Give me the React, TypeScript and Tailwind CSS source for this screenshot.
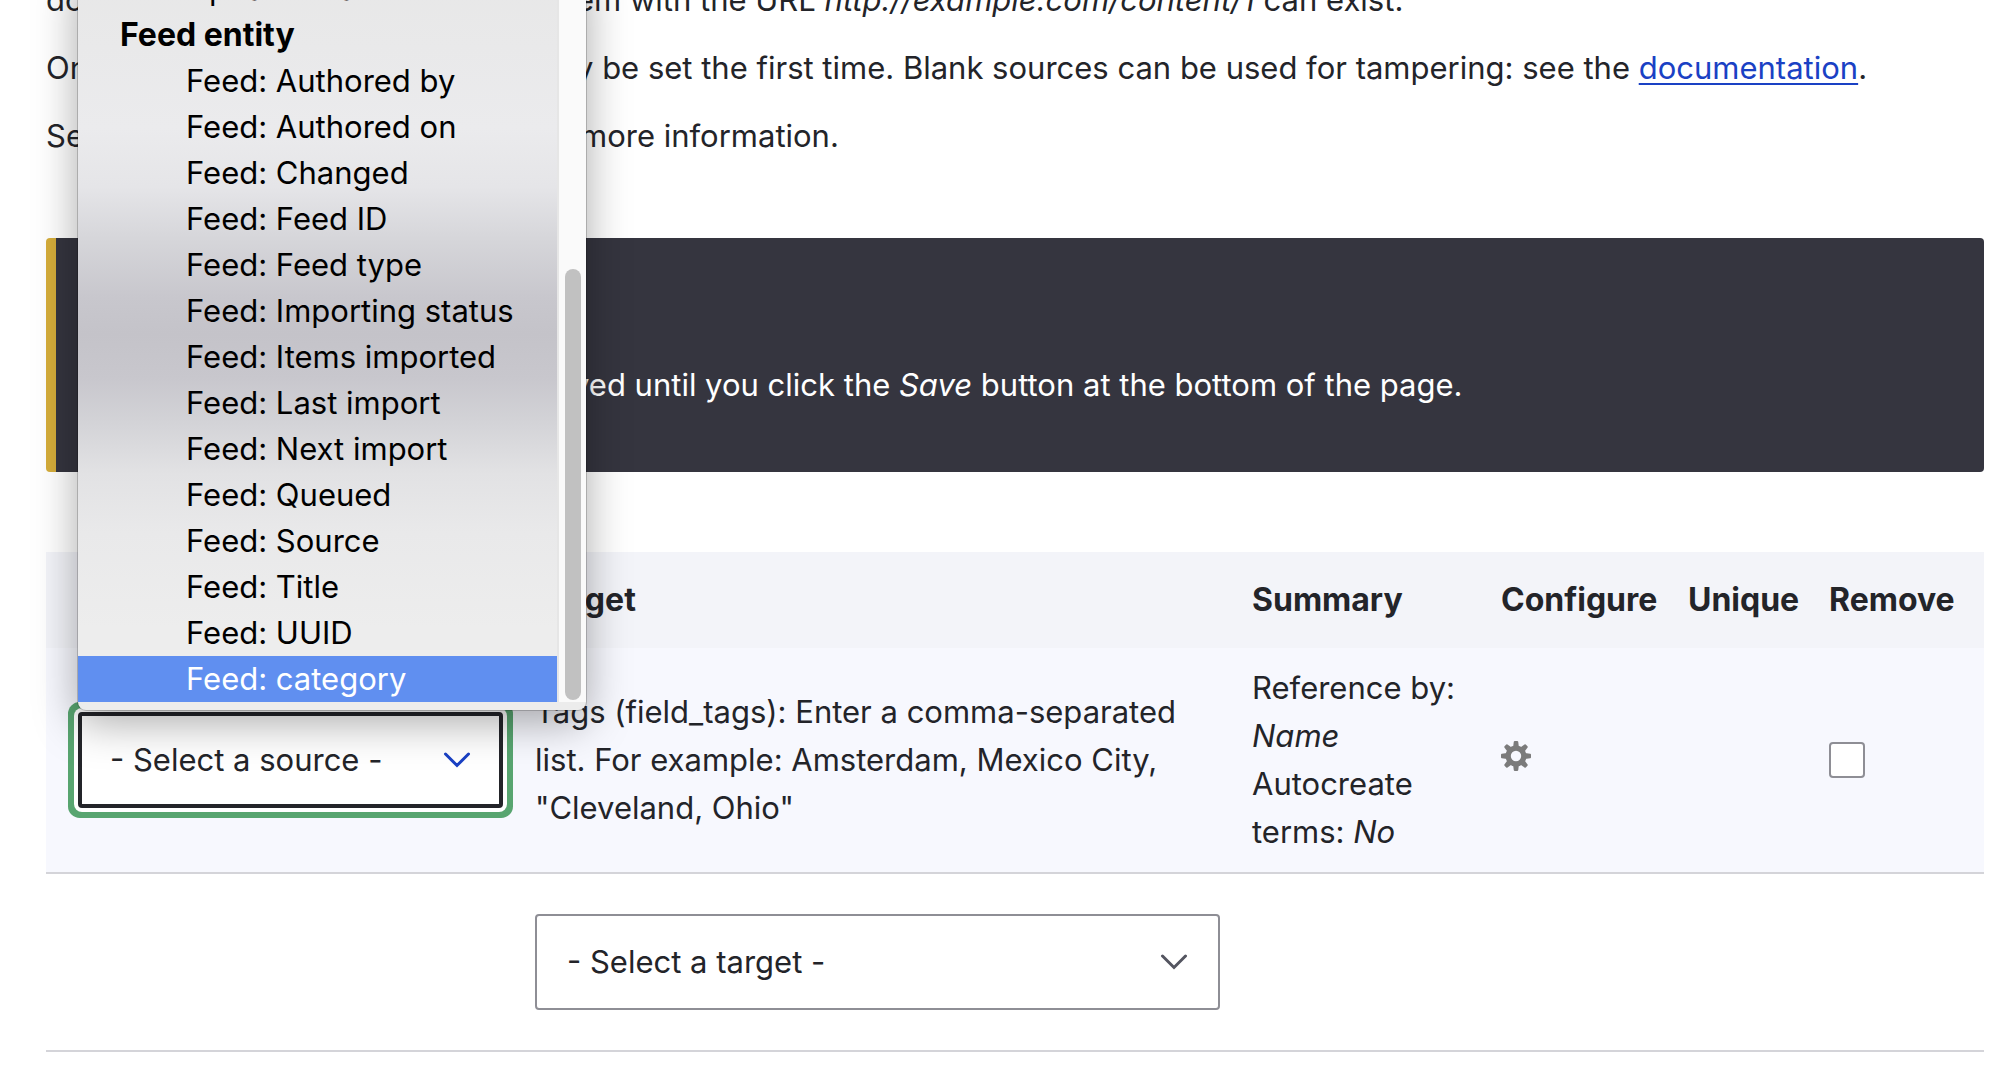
const feedOptions = [
  'Feed: Authored by',
  'Feed: Authored on',
  'Feed: Changed',
  'Feed: Feed ID',
  'Feed: Feed type',
  'Feed: Importing status',
  'Feed: Items imported',
  'Feed: Last import',
  'Feed: Next import',
  'Feed: Queued',
  'Feed: Source',
  'Feed: Title',
  'Feed: UUID',
  'Feed: category',
]

function Chevron({ className }: { className: string }) {
  return (
    <svg
      viewBox="0 0 28 18"
      className={`pointer-events-none absolute right-8 top-10 h-[18px] w-7 ${className}`}
      fill="none"
      stroke="currentColor"
      strokeWidth="3"
      strokeLinecap="round"
    >
      <path d="M2.5 2 14 13.5 25.5 2" />
    </svg>
  )
}

function Gear() {
  return (
    <svg viewBox="-15 -15 30 30" className="h-[30px] w-[30px]" fill="#7b7b7b">
      <path
        fillRule="evenodd"
        d="M0-10.5a10.5 10.5 0 1 0 0 21a10.5 10.5 0 1 0 0-21zM0-5.2a5.2 5.2 0 1 1 0 10.4a5.2 5.2 0 1 1 0-10.4z"
      />
      {[0, 45, 90, 135, 180, 225, 270, 315].map((angle) => (
        <path
          key={angle}
          transform={`rotate(${angle})`}
          d="M-2.9-9 L-2.2-14.2 Q-2-15-1.2-15 H1.2 Q2-15 2.2-14.2 L2.9-9z"
        />
      ))}
    </svg>
  )
}

function SourceMenu() {
  return (
    <div className="absolute bottom-full left-0 z-10 mb-0.5 w-[508px] overflow-hidden rounded-b-lg bg-[#ececec] pb-2 text-black shadow-[0_0_0_1px_#00000030,0_12px_44px_#00000058]">
      <div className="flex bg-linear-to-b from-[#e7e7e7] to-[#ededed]">
        <ul
          role="listbox"
          aria-label="Source"
          className="flex-1 bg-[linear-gradient(to_bottom,#e7e7e7_0%,#ebebed_22%,#e5e5e8_30%,#d6d6da_37%,#c8c7cd_45%,#c4c3c9_50%,#c8c7cd_56%,#d3d3d7_62%,#e2e2e4_69%,#e9e9ea_77%,#ededed_90%)] leading-[46px]"
        >
          <li className="pl-[108px]">Updated date</li>
          <li className="pl-[42px] text-[32px] font-bold">Feed entity</li>
          {feedOptions.map((option) => (
            <li
              key={option}
              role="option"
              aria-selected={option === 'Feed: category'}
              className="pl-[108px] aria-selected:bg-[#608ff0] aria-selected:text-white"
            >
              {option}
            </li>
          ))}
        </ul>
        <div className="flex w-[29px] flex-col justify-end border-l-2 border-[#e6e6e6] bg-[#fafafa] pb-0.5 pl-1.5">
          <div className="h-[431px] w-4 rounded-full bg-[#c1c1c1]" />
        </div>
      </div>
    </div>
  )
}

export default function App() {
  return (
    <div className="overflow-hidden bg-white font-['Inter',sans-serif] text-[31px] leading-[48px] text-[#232429]">
      <main className="-mt-6 pb-8 pl-[46px] pr-[26px]">
        <div className="flex flex-col gap-5 whitespace-nowrap">
          <p className="flex">
            <span className="w-[530px] flex-none">do</span>
            <span>em with the URL <em>http://example.com/content/1</em> can exist.</span>
          </p>
          <p className="flex">
            <span className="w-[530px] flex-none">On</span>
            <span>
              y be set the first time. Blank sources can be used for tampering: see the{' '}
              <a href="#documentation" className="text-[#1a41c4] underline decoration-2 underline-offset-4">documentation</a>.
            </span>
          </p>
          <p className="flex">
            <span className="w-[534px] flex-none">See</span>
            <span>more information.</span>
          </p>
        </div>

        <div
          role="status"
          className="mt-[78px] flex h-[234px] items-center rounded border-l-10 border-[#d5ad3a] bg-[#35353f] pl-[516px] pt-[60px] text-white"
        >
          <p className="whitespace-nowrap">
            ved until you click the <em>Save</em> button at the bottom of the page.
          </p>
        </div>

        <table className="mt-20 w-full table-fixed text-left">
          <colgroup>
            <col className="w-[457px]" />
            <col />
            <col className="w-[249px]" />
            <col className="w-[187px]" />
            <col className="w-[141px]" />
            <col className="w-[187px]" />
          </colgroup>
          <thead className="bg-[#f3f4f9] text-[32px]">
            <tr>
              <th className="py-6 pl-8">Source</th>
              <th className="py-6 pl-8">Target</th>
              <th className="py-6 pl-8">Summary</th>
              <th className="py-6 pl-8">Configure</th>
              <th className="py-6 pl-8">Unique</th>
              <th className="py-6 pl-8">Remove</th>
            </tr>
          </thead>
          <tbody>
            <tr className="border-b-2 border-[#d4d4d9] bg-[#f7f8fe]">
              <td className="pl-8">
                <div className="relative">
                  <select
                    aria-label="Source"
                    className="block h-24 w-full appearance-none rounded border-4 border-[#232429] bg-white pl-7 outline-none shadow-[0_0_0_4px_#fff,0_0_0_10px_#58a570]"
                  >
                    <option>- Select a source -</option>
                  </select>
                  <Chevron className="text-[#1a41c4]" />
                  <SourceMenu />
                </div>
              </td>
              <td className="py-4 pl-8">
                Tags (field_tags): Enter a comma-separated list. For example: Amsterdam, Mexico City, "Cleveland, Ohio"
              </td>
              <td className="py-4 pl-8">
                Reference by: <em>Name</em>
                <br />
                Autocreate terms: <em>No</em>
              </td>
              <td className="pl-8">
                <button type="button" aria-label="Configure" className="block pb-2">
                  <Gear />
                </button>
              </td>
              <td />
              <td className="pl-8">
                <input
                  type="checkbox"
                  aria-label="Remove"
                  className="block h-9 w-9 appearance-none rounded border-2 border-[#8e8e95] bg-white"
                />
              </td>
            </tr>
            <tr className="border-b-2 border-[#d4d4d9]">
              <td />
              <td className="py-10 pl-8">
                <div className="relative">
                  <select
                    aria-label="Target"
                    className="block h-24 w-full appearance-none rounded border-2 border-[#8e8e95] bg-white pl-[30px]"
                  >
                    <option>- Select a target -</option>
                  </select>
                  <Chevron className="text-[#545560]" />
                </div>
              </td>
              <td colSpan={4} />
            </tr>
          </tbody>
        </table>
      </main>
    </div>
  )
}
